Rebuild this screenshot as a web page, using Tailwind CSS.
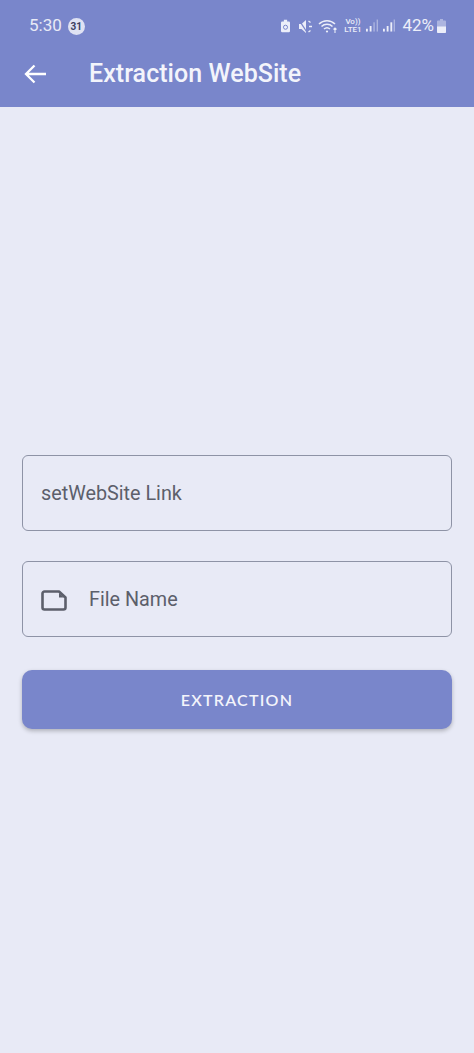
<!DOCTYPE html>
<html lang="en">
<head>
    <meta charset="UTF-8">
    <meta name="viewport" content="width=device-width, initial-scale=1.0">
    <title>Extraction WebSite</title>
    <script src="https://cdn.jsdelivr.net/npm/@tailwindcss/browser@4"></script>
</head>
<body class="bg-[#e8eaf6] font-['Roboto',sans-serif] h-[1053px] overflow-hidden">

    <!-- Status bar + app bar -->
    <header class="bg-[#7986cb] h-[107px] text-white">
        <div class="h-[47px] flex items-center justify-between pl-[29px] pr-[28px] pt-[5px]">
            <div class="flex items-center gap-[6px]">
                <span class="text-[17px] text-[#e8eaf6]">5:30</span>
                <span class="w-[17px] h-[17px] rounded-full bg-[#dfe2f3] text-[#3c4060] text-[10px] font-bold flex items-center justify-center">31</span>
            </div>
            <div class="flex items-center text-[#eceef9]">
                <!-- alarm/battery saver -->
                <svg class="w-[9px] h-[14px] mr-[9px]" viewBox="0 0 11 15" fill="currentColor"><path d="M3.500 0h4v2h2A1.500 1.500 0 0 1 11 3.500V13.500A1.500 1.500 0 0 1 9.500 15h-8A1.500 1.500 0 0 1 0 13.500V3.500A1.500 1.500 0 0 1 1.500 2h2z"/><circle cx="5.500" cy="9" r="2.500" fill="none" stroke="#7986cb" stroke-width="1.200"/></svg>
                <!-- mute -->
                <svg class="w-[13px] h-[15px] mr-[6px]" viewBox="0 0 13 15" fill="currentColor"><path d="M0 5h2.500L7 1v13l-4.500-4H0z"/><path d="M0 1l8.500 13" stroke="#7986cb" stroke-width="1.300"/><path d="M9.500 2l2 1.500M10 7.500h3M9.500 13l2-1.500" stroke="currentColor" stroke-width="1.300" fill="none"/></svg>
                <!-- wifi -->
                <svg class="w-[20px] h-[15px] mr-[6px]" viewBox="0 0 20 15" fill="none" stroke="currentColor" stroke-width="1.500"><path d="M1 5c4.500-4.500 11.500-4.500 16 0"/><path d="M3.500 7.500c3-3 8-3 11 0"/><path d="M6 10c1.800-1.600 4.200-1.600 6 0"/><circle cx="9" cy="12.500" r="1.100" fill="currentColor" stroke="none"/><path d="M17 14V9M15.500 10.500L17 9l1.500 1.500" stroke-width="1.100"/></svg>
                <!-- volte -->
                <div class="flex flex-col items-center text-[8px] leading-[8px] font-medium w-[17px] mr-[5px]">
                    <span>Vo))</span>
                    <span>LTE1</span>
                </div>
                <!-- signal bars -->
                <svg class="w-[12px] h-[14px] mr-[5px]" viewBox="0 0 13 14" fill="currentColor"><rect x="0" y="10" width="2" height="3"/><rect x="4" y="7" width="2" height="6"/><rect x="8" y="3" width="1.500" height="10" opacity=".45"/><rect x="11.500" y="0" width="1.500" height="13" opacity=".45"/></svg>
                <svg class="w-[12px] h-[14px] mr-[7px]" viewBox="0 0 13 14" fill="currentColor"><rect x="0" y="10" width="2" height="3"/><rect x="4" y="7" width="2" height="6"/><rect x="8" y="3" width="2" height="10"/><rect x="11.500" y="0" width="1.500" height="13" opacity=".45"/></svg>
                <span class="text-[17px] mr-[3px]">42%</span>
                <!-- battery -->
                <svg class="w-[9px] h-[14px]" viewBox="0 0 9 14" fill="currentColor"><path d="M3 0h3v1.500h2a1 1 0 0 1 1 1V13a1 1 0 0 1-1 1H1a1 1 0 0 1-1-1V2.500a1 1 0 0 1 1-1h2z" opacity=".45"/><path d="M0 7.500h9V13a1 1 0 0 1-1 1H1a1 1 0 0 1-1-1z"/></svg>
            </div>
        </div>
        <div class="h-[52px] flex items-center pl-[24px] pt-[1px]">
            <svg class="w-[22px] h-[20px]" viewBox="0 0 22 20" fill="none" stroke="white" stroke-width="2.300"><path d="M22 10H2M10.500 1.500L2 10l8.500 8.500"/></svg>
            <h1 class="ml-[43px] text-[25px] font-medium text-[#f3f4fb] tracking-[0.050px]">Extraction WebSite</h1>
        </div>
    </header>

    <!-- Form -->
    <main class="px-[22px] pt-[348px] flex flex-col">
        <div class="h-[76px] border-[1.5px] border-[#8e93a6] rounded-[6px] flex items-center pl-[18px] pt-[2px] text-[19.800px] text-[#5c5f6b]">setWebSite Link</div>
        <div class="mt-[30px] h-[76px] border-[1.5px] border-[#8e93a6] rounded-[6px] flex items-center pl-[18px] pt-[2px] text-[19.800px] text-[#5c5f6b]">
            <svg class="w-[26px] h-[21px] shrink-0" viewBox="0 0 26 21" fill="none" stroke="#5c5f6b" stroke-width="2.600" stroke-linejoin="round"><path d="M3.500 1.500H18L24.500 7.500V17.500a2 2 0 0 1-2 2h-19a2 2 0 0 1-2-2v-14a2 2 0 0 1 2-2z"/><path d="M18 3V7.500H23z" fill="#5c5f6b" stroke="none"/></svg>
            <span class="ml-[22px]">File Name</span>
        </div>
        <button class="mt-[33px] h-[59px] bg-[#7986cb] rounded-[10px] shadow-[0_2px_4px_rgba(0,0,0,0.25)] text-[#f3f4fb] text-[16px] font-['Lato',sans-serif] font-semibold tracking-[1.250px]">EXTRACTION</button>
    </main>

</body>
</html>
